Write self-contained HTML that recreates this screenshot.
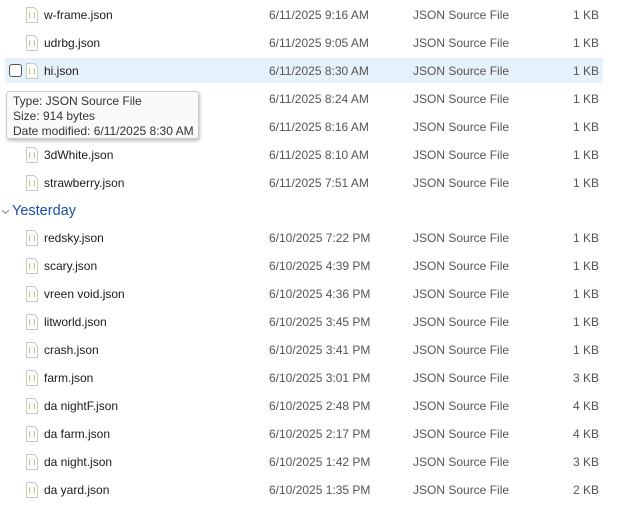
<!DOCTYPE html>
<html><head><meta charset="utf-8"><style>
body{margin:0;width:624px;height:508px;background:#fff;font-family:"Liberation Sans",sans-serif;font-size:12px;color:#1a1a1a;position:relative;overflow:hidden}
.r{position:absolute;left:0;width:624px;height:24px;line-height:24px}
.r .ic{position:absolute;left:26px;top:4px}
.r .n{position:absolute;left:44px}
.r .d{position:absolute;left:269px;color:#555}
.r .t{position:absolute;left:413px;color:#555}
.r .s{position:absolute;right:25px;color:#555}
.hl{position:absolute;left:5px;top:58px;width:598px;height:25px;background:#e5f1fb}
.cb{position:absolute;left:9px;top:64px;width:11px;height:11px;border:1px solid #555;border-radius:3px;background:#fff}
.tip{position:absolute;left:6px;top:91px;width:193px;height:48px;background:#fafafa;border:1px solid #ccc;border-radius:3px;box-shadow:1px 2px 3px rgba(0,0,0,.25);font-size:12px;line-height:15px;padding:2px 0 0 6px;box-sizing:border-box;color:#333}
.y{position:absolute;left:12px;top:203px;font-size:14.5px;color:#1c4fa8}
</style></head><body>
<div class="hl"></div>
<div id="rows"></div>
<div class="y">Yesterday</div>
<svg style="position:absolute;left:1px;top:207px" width="9" height="9"><path d="M1 3 L4.5 6.5 L8 3" fill="none" stroke="#888" stroke-width="1"/></svg>
<div class="cb"></div>
<div class="tip">Type: JSON Source File<br>Size: 914 bytes<br>Date modified: 6/11/2025 8:30 AM</div>
<script>
var data=[[15,"w-frame.json","6/11/2025 9:16 AM","1 KB"],[43,"udrbg.json","6/11/2025 9:05 AM","1 KB"],[71,"hi.json","6/11/2025 8:30 AM","1 KB"],[99,"","6/11/2025 8:24 AM","1 KB"],[127,"","6/11/2025 8:16 AM","1 KB"],[155,"3dWhite.json","6/11/2025 8:10 AM","1 KB"],[183,"strawberry.json","6/11/2025 7:51 AM","1 KB"],
[238,"redsky.json","6/10/2025 7:22 PM","1 KB"],[266,"scary.json","6/10/2025 4:39 PM","1 KB"],[294,"vreen void.json","6/10/2025 4:36 PM","1 KB"],[322,"litworld.json","6/10/2025 3:45 PM","1 KB"],[350,"crash.json","6/10/2025 3:41 PM","1 KB"],[378,"farm.json","6/10/2025 3:01 PM","3 KB"],[406,"da nightF.json","6/10/2025 2:48 PM","4 KB"],[434,"da farm.json","6/10/2025 2:17 PM","4 KB"],[462,"da night.json","6/10/2025 1:42 PM","3 KB"],[490,"da yard.json","6/10/2025 1:35 PM","2 KB"]];
var ic='<svg class="ic" width="12" height="16"><path d="M0.5 0.5H8L11.5 4V15.5H0.5Z" fill="#fff" stroke="#c8c8c8"/><path d="M4.5 5.5Q3.5 5.5 3.5 7V9.5Q3.5 11 4.5 11M7.5 5.5Q8.5 5.5 8.5 7V9.5Q8.5 11 7.5 11" fill="none" stroke="#b8c870"/></svg>';
var h='';
data.forEach(function(d){var ico=d[1]?ic:'';h+='<div class="r" style="top:'+(d[0]-12)+'px">'+ico+'<span class="n">'+d[1]+'</span><span class="d">'+d[2]+'</span><span class="t">JSON Source File</span><span class="s">'+d[3]+'</span></div>';});
document.getElementById('rows').innerHTML=h;
</script>
</body></html>
